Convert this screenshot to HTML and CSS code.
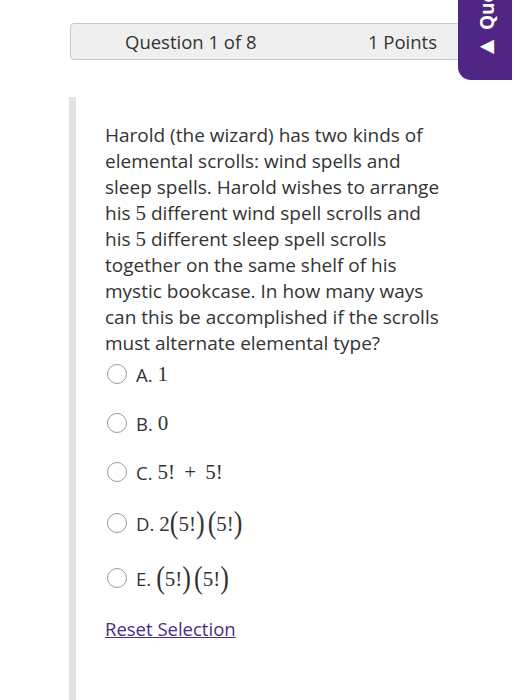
FILE: index.html
```html
<!DOCTYPE html>
<html>
<head>
<meta charset="utf-8">
<link rel="stylesheet" href="styles.css">
</head>
<body>
<div class="page">
  <div class="header-row">
    <div class="q-header">
      <span class="q-num">Question 1 of 8</span>
      <span class="q-points">1 Points</span>
    </div>
    <div class="side-tab"><span class="side-tab-text"><span class="tri">&#9650;</span> Questions</span></div>
  </div>
  <div class="panel">
    <p class="stem">Harold (the wizard) has two kinds of elemental scrolls: wind spells and sleep spells. Harold wishes to arrange his <span class="m">5</span> different wind spell scrolls and his <span class="m">5</span> different sleep spell scrolls together on the same shelf of his mystic bookcase. In how many ways can this be accomplished if the scrolls must alternate elemental type?</p>
    <ul class="options">
      <li class="opt opt-a"><span class="radio"></span><span class="lbl">A.</span><span class="m">1</span></li>
      <li class="opt"><span class="radio"></span><span class="lbl">B.</span><span class="m">0</span></li>
      <li class="opt"><span class="radio"></span><span class="lbl">C.</span><span class="m">5! <span class="op">+</span> 5!</span></li>
      <li class="opt opt-tall opt-d"><span class="radio"></span><span class="lbl">D.</span><span class="m">2<span class="bp">(</span>5!<span class="bp">)</span><span class="bp sp">(</span>5!<span class="bp">)</span></span></li>
      <li class="opt opt-tall opt-e"><span class="radio"></span><span class="lbl">E.</span><span class="m"><span class="bp">(</span>5!<span class="bp">)</span><span class="bp sp">(</span>5!<span class="bp">)</span></span></li>
    </ul>
    <a class="reset" href="#">Reset Selection</a>
  </div>
</div>
</body>
</html>
```

FILE: styles.css
```css
html, body {
  margin: 0;
  padding: 0;
  background: #ffffff;
}
body {
  font-family: "Open Sans", "Liberation Sans", sans-serif;
  color: #333333;
  width: 526px;
  height: 700px;
  overflow: hidden;
}
.page {
  position: relative;
}
.header-row {
  position: relative;
  padding-top: 23px;
  padding-left: 70px;
  height: 37px;
}
.q-header {
  box-sizing: border-box;
  width: 440px;
  height: 37px;
  background: #efefef;
  border: 1px solid #c9c9c9;
  border-radius: 4px;
  display: flex;
  align-items: center;
  justify-content: space-between;
  padding-left: 54px;
  padding-right: 72px;
  font-size: 18.5px;
  color: #333333;
}
.side-tab {
  position: absolute;
  top: 0;
  left: 458px;
  width: 54px;
  height: 80px;
  background: #4f2683;
  border-bottom-left-radius: 13px;
  overflow: hidden;
}
.side-tab-text {
  position: absolute;
  left: 14px;
  bottom: 21px;
  writing-mode: vertical-rl;
  text-orientation: sideways;
  transform: rotate(180deg);
  color: #ffffff;
  font-weight: 700;
  font-size: 19px;
  line-height: 26px;
  white-space: nowrap;
}
.tri {
  font-size: 24px;
}
.panel {
  margin-top: 37px;
  margin-left: 69px;
  border-left: 7px solid #e2e2e2;
  padding-left: 29px;
  padding-top: 25px;
  height: 610px;
}
.stem {
  margin: 0;
  width: 338px;
  font-size: 19px;
  line-height: 26px;
  color: #333333;
}
.m {
  font-family: "Liberation Serif", "DejaVu Serif", serif;
  font-size: 21px;
  line-height: 1;
}
.op {
  margin: 0 4px;
}
.options {
  list-style: none;
  margin: 0;
  padding: 0;
}
.opt {
  display: flex;
  align-items: center;
  height: 26px;
  margin-top: 23px;
  font-size: 18.5px;
}
.opt-a {
  margin-top: 5px;
}
.opt-tall {
  height: 32px;
}
.opt-d {
  margin-top: 22px;
}
.opt-e {
  margin-top: 23px;
}
.radio {
  box-sizing: border-box;
  width: 20px;
  height: 20px;
  border: 1.5px solid #9a9a9a;
  border-radius: 50%;
  margin-left: 2px;
  margin-right: 9px;
  background: #fff;
}
.lbl {
  margin-right: 5px;
}
.bp {
  font-size: 26px;
  display: inline-block;
  transform: scaleY(1.2);
}
.sp {
  margin-left: 3px;
}
.reset {
  display: inline-block;
  margin-top: 22px;
  font-size: 18.5px;
  color: #4b2e83;
  text-decoration: underline;
}
```
